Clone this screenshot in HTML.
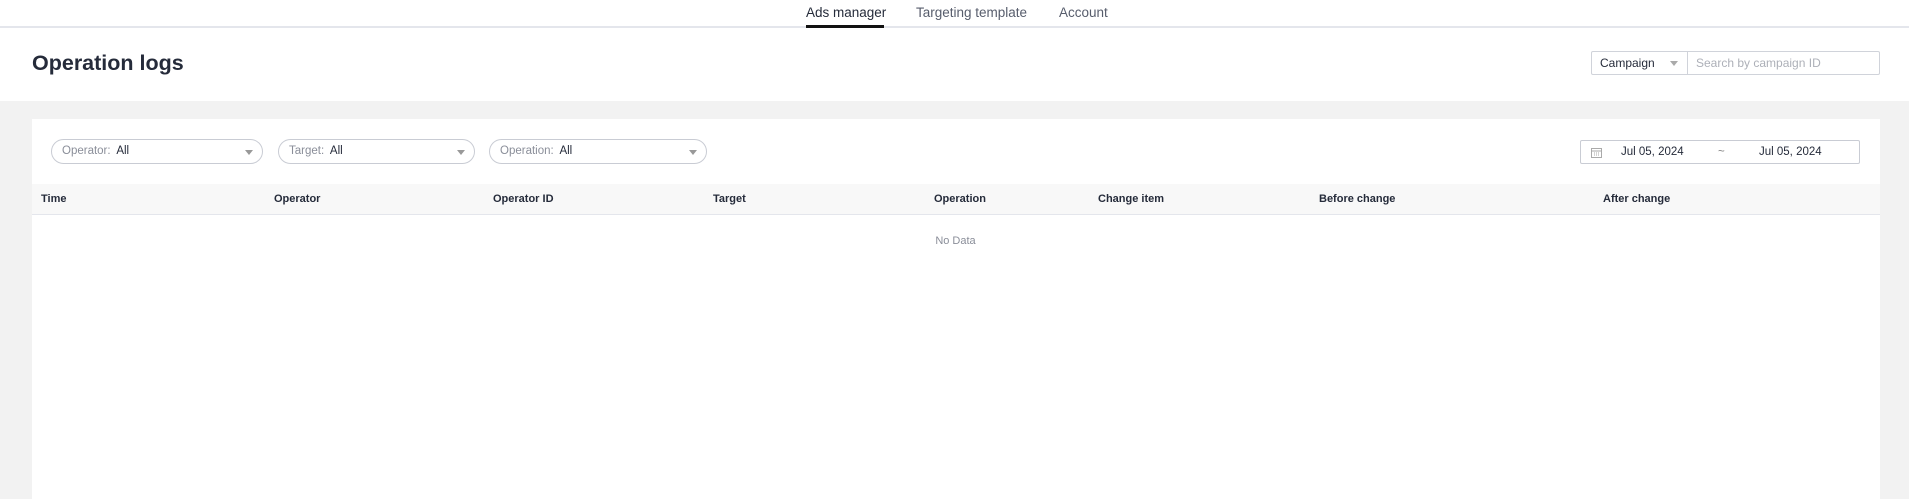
<!DOCTYPE html>
<html><head><meta charset="utf-8"><style>
*{box-sizing:border-box;margin:0;padding:0}
body{width:1909px;height:489px;overflow:hidden;background:#f2f2f2;font-family:"Liberation Sans",sans-serif;color:#252b3a;position:relative}
.top{position:absolute;left:0;top:0;width:1909px;height:101px;background:#fff}
.navline{position:absolute;left:0;top:26px;width:1909px;height:2px;background:#e4e6ec}
.nav{position:absolute;top:5px;font-size:13.5px;color:#575d6c}
.ul{position:absolute;left:806px;top:25px;width:78px;height:3px;background:#111}
h1{position:absolute;left:32px;top:51px;font-size:21.5px;font-weight:600;color:#252b3a}
.sg{position:absolute;left:1591px;top:51px;width:289px;height:24px;border:1px solid #d0d3da;border-radius:2px;background:#fff;font-size:12px}
.sg .s1{position:absolute;left:0;top:0;width:96px;height:22px;border-right:1px solid #d0d3da;padding:4px 8px;color:#252b3a}
.sg .s2{position:absolute;left:104px;top:4px;color:#adb0b8}
.tri{position:absolute;width:0;height:0;border-left:4px solid transparent;border-right:4px solid transparent;border-top:5px solid #999}
.card{position:absolute;left:32px;top:119px;width:1848px;height:380px;background:#fff}
.f{position:absolute;top:139px;height:25px;border:1px solid #c9ccd4;border-radius:13px;font-size:11.5px;padding:5px 10px;color:#252b3a;background:#fff}
.f span{color:#8a8e99}
.dp{position:absolute;left:1580px;top:140px;width:280px;height:24px;border:1px solid #c9ccd4;border-radius:2px;font-size:11.5px;color:#252b3a}
.th{position:absolute;left:32px;top:184px;width:1848px;height:31px;background:#f8f8f8;border-bottom:1px solid #e4e6ec}
.th div{position:absolute;top:9px;font-size:11px;font-weight:600;color:#252b3a}
.nd{position:absolute;left:0;width:1909px;top:235px;text-align:center;font-size:11px;color:#8a8e99;padding-left:2px}
</style></head><body>
<div class="top"></div>
<div class="navline"></div>
<div class="nav" style="left:806px;color:#252b3a">Ads manager</div>
<div class="nav" style="left:916px">Targeting template</div>
<div class="nav" style="left:1059px">Account</div>
<div class="ul"></div>
<h1>Operation logs</h1>
<div class="sg"><div class="s1">Campaign<div class="tri" style="left:78px;top:9px;border-top-color:#aaa"></div></div><div class="s2">Search by campaign ID</div></div>
<div class="card"></div>
<div class="f" style="left:51px;width:212px"><span>Operator:</span>&nbsp; All<div class="tri" style="right:9px;top:10px"></div></div>
<div class="f" style="left:278px;width:197px"><span>Target:</span>&nbsp; All<div class="tri" style="right:9px;top:10px"></div></div>
<div class="f" style="left:489px;width:218px"><span>Operation:</span>&nbsp; All<div class="tri" style="right:9px;top:10px"></div></div>
<div class="dp">
<svg style="position:absolute;left:10px;top:6px" width="11" height="11" viewBox="0 0 11 11"><rect x="0.5" y="1.5" width="10" height="9" fill="none" stroke="#aaa"/><line x1="0.5" y1="4" x2="10.5" y2="4" stroke="#aaa"/><path d="M3 6h1M5 6h1M7 6h1M3 8h1M5 8h1M7 8h1" stroke="#aaa"/></svg>
<span style="position:absolute;left:40px;top:5px">Jul 05, 2024</span>
<span style="position:absolute;left:137px;top:5px;color:#888">~</span>
<span style="position:absolute;left:178px;top:5px">Jul 05, 2024</span>
</div>
<div class="th">
<div style="left:9px">Time</div>
<div style="left:242px">Operator</div>
<div style="left:461px">Operator ID</div>
<div style="left:681px">Target</div>
<div style="left:902px">Operation</div>
<div style="left:1066px">Change item</div>
<div style="left:1287px">Before change</div>
<div style="left:1571px">After change</div>
</div>
<div class="nd">No Data</div>
</body></html>
